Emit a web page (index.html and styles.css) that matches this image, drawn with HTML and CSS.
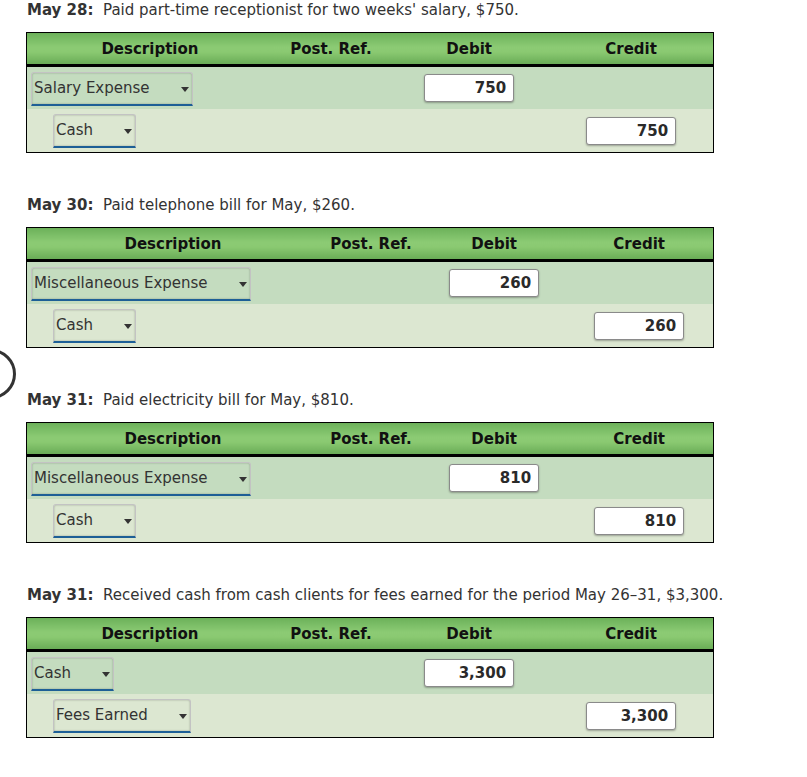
FILE: index.html
```html
<!DOCTYPE html>
<html>
<head>
<meta charset="utf-8">
<link rel="stylesheet" href="styles.css">
</head>
<body>
<div class="ring"></div>
<div class="page">
  <section class="entry">
    <p class="prompt"><b>May 28:</b>&nbsp; Paid part-time receptionist for two weeks' salary, $750.</p>
    <table class="journal narrow">
      <colgroup><col class="c-desc"><col class="c-ref"><col class="c-debit"><col class="c-credit"></colgroup>
      <thead><tr><th>Description</th><th>Post. Ref.</th><th>Debit</th><th>Credit</th></tr></thead>
      <tbody>
        <tr class="r1"><td><span class="select">Salary Expense<i class="caret"></i></span></td><td></td><td><span class="amt">750</span></td><td></td></tr>
        <tr class="r2"><td><span class="select indent">Cash<i class="caret"></i></span></td><td></td><td></td><td><span class="amt">750</span></td></tr>
      </tbody>
    </table>
  </section>

  <section class="entry">
    <p class="prompt"><b>May 30:</b>&nbsp; Paid telephone bill for May, $260.</p>
    <table class="journal wide">
      <colgroup><col class="c-desc"><col class="c-ref"><col class="c-debit"><col class="c-credit"></colgroup>
      <thead><tr><th>Description</th><th>Post. Ref.</th><th>Debit</th><th>Credit</th></tr></thead>
      <tbody>
        <tr class="r1"><td><span class="select">Miscellaneous Expense<i class="caret"></i></span></td><td></td><td><span class="amt">260</span></td><td></td></tr>
        <tr class="r2"><td><span class="select indent">Cash<i class="caret"></i></span></td><td></td><td></td><td><span class="amt">260</span></td></tr>
      </tbody>
    </table>
  </section>

  <section class="entry">
    <p class="prompt"><b>May 31:</b>&nbsp; Paid electricity bill for May, $810.</p>
    <table class="journal wide">
      <colgroup><col class="c-desc"><col class="c-ref"><col class="c-debit"><col class="c-credit"></colgroup>
      <thead><tr><th>Description</th><th>Post. Ref.</th><th>Debit</th><th>Credit</th></tr></thead>
      <tbody>
        <tr class="r1"><td><span class="select">Miscellaneous Expense<i class="caret"></i></span></td><td></td><td><span class="amt">810</span></td><td></td></tr>
        <tr class="r2"><td><span class="select indent">Cash<i class="caret"></i></span></td><td></td><td></td><td><span class="amt">810</span></td></tr>
      </tbody>
    </table>
  </section>

  <section class="entry">
    <p class="prompt"><b>May 31:</b>&nbsp; Received cash from cash clients for fees earned for the period May 26–31, $3,300.</p>
    <table class="journal narrow">
      <colgroup><col class="c-desc"><col class="c-ref"><col class="c-debit"><col class="c-credit"></colgroup>
      <thead><tr><th>Description</th><th>Post. Ref.</th><th>Debit</th><th>Credit</th></tr></thead>
      <tbody>
        <tr class="r1"><td><span class="select">Cash<i class="caret"></i></span></td><td></td><td><span class="amt">3,300</span></td><td></td></tr>
        <tr class="r2"><td><span class="select indent">Fees Earned<i class="caret"></i></span></td><td></td><td></td><td><span class="amt">3,300</span></td></tr>
      </tbody>
    </table>
  </section>
</div>
</body>
</html>
```

FILE: styles.css
```css
html, body {
  margin: 0;
  padding: 0;
  background: #ffffff;
}
body {
  position: relative;
  font-family: "DejaVu Sans", Verdana, sans-serif;
  font-size: 15px;
  color: #333333;
}
.page {
  padding: 1px 0 0 26px;
}
.entry {
  margin: 0 0 43px 0;
}
.prompt {
  margin: 0 0 13px 1px;
  height: 18px;
  line-height: 18px;
  font-size: 15px;
  color: #333333;
  white-space: nowrap;
}
.prompt b {
  font-weight: bold;
  color: #333333;
}
.journal {
  border-collapse: collapse;
  table-layout: fixed;
  width: 688px;
  border: 1px solid #000000;
}
.narrow .c-desc { width: 246px; }
.narrow .c-ref { width: 116px; }
.narrow .c-debit { width: 160px; }
.narrow .c-credit { width: 164px; }
.wide .c-desc { width: 292px; }
.wide .c-ref { width: 104px; }
.wide .c-debit { width: 142px; }
.wide .c-credit { width: 148px; }

.journal th {
  height: 31px;
  padding: 0;
  font-weight: bold;
  font-size: 15px;
  color: #111111;
  text-align: center;
  background: linear-gradient(#6db25b 0%, #8ccb74 45%, #8ac971 60%, #68ab56 100%);
  border-bottom: 3px solid #000000;
}
.journal td {
  padding: 0;
  vertical-align: middle;
}
.journal .r1 td {
  height: 42px;
  background: #c4dcbf;
}
.journal .r2 td {
  height: 43px;
  background: #dce7d1;
}
.journal td:nth-child(3),
.journal td:nth-child(4) {
  text-align: center;
}
.select {
  position: relative;
  display: inline-block;
  box-sizing: border-box;
  height: 34px;
  line-height: 31px;
  margin-left: 4px;
  margin-top: 1px;
  padding: 0 42px 0 2px;
  color: #333333;
  border: 1px solid #c3c3c3;
  border-bottom: 2px solid #1d5f96;
  border-radius: 3px 3px 0 0;
  box-shadow: inset 0 0 2px rgba(0,0,0,0.3);
  vertical-align: middle;
}
.select.indent {
  margin-left: 26px;
}
.caret {
  position: absolute;
  right: 3px;
  top: 14px;
  width: 0;
  height: 0;
  border-left: 4px solid transparent;
  border-right: 4px solid transparent;
  border-top: 5px solid #333333;
}
.amt {
  display: inline-block;
  box-sizing: border-box;
  width: 90px;
  height: 28px;
  line-height: 26px;
  padding-right: 7px;
  text-align: right;
  font-weight: bold;
  color: #2a2a2a;
  background: #ffffff;
  border: 1px solid #8a8a8a;
  border-radius: 3px;
  box-shadow: 0 1px 2px rgba(0,0,0,0.3);
  vertical-align: middle;
}
.ring {
  position: absolute;
  left: -34px;
  top: 349px;
  width: 44px;
  height: 44px;
  border: 3px solid #333333;
  border-radius: 50%;
}
```
